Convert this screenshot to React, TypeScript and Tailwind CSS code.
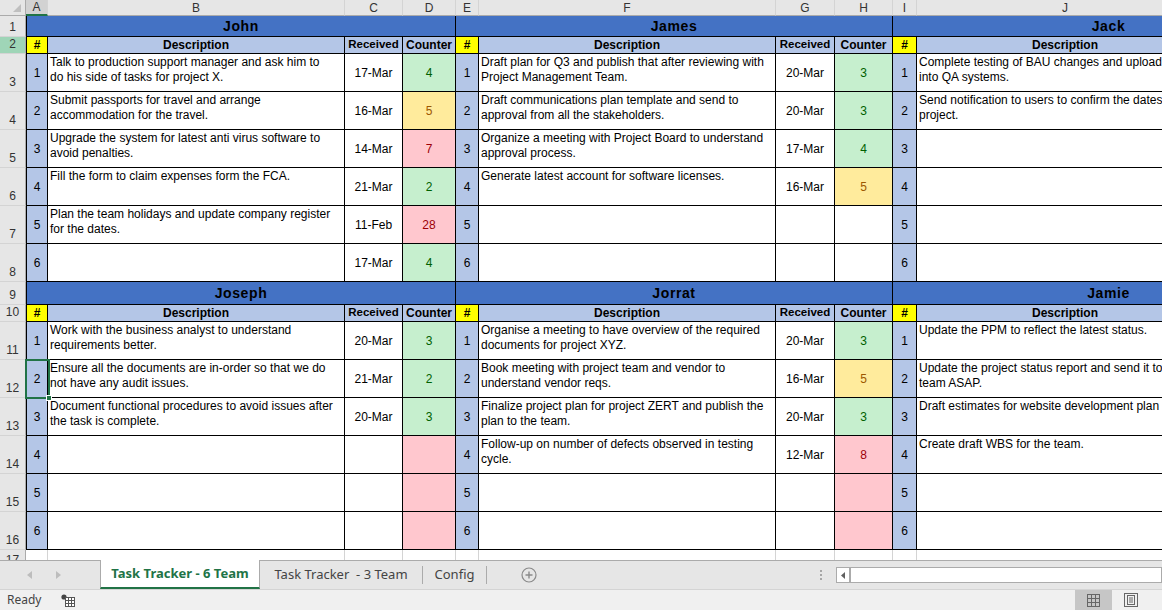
import React from "react";

type Tone = "g" | "y" | "r" | "";

interface Task {
  lines: string[];
  recv: string;
  tone: Tone;
  count: string;
}

interface Block {
  name: string;
  tasks: Task[];
}

const FONT = "font-['Liberation_Sans',Arial,sans-serif]";
const UI = "font-['Noto_Sans','Liberation_Sans',sans-serif]";

const t = (lines: string[], recv = "", tone: Tone = "", count = ""): Task => ({
  lines,
  recv,
  tone,
  count,
});

const topBlocks: Block[] = [
  {
    name: "John",
    tasks: [
      t(["Talk to production support manager and ask him to", "do his side of tasks for project X."], "17-Mar", "g", "4"),
      t(["Submit passports for travel and arrange", "accommodation for the travel."], "16-Mar", "y", "5"),
      t(["Upgrade the system for latest anti virus software to", "avoid penalties."], "14-Mar", "r", "7"),
      t(["Fill the form to claim expenses form the FCA."], "21-Mar", "g", "2"),
      t(["Plan the team holidays and update company register", "for the dates."], "11-Feb", "r", "28"),
      t([], "17-Mar", "g", "4"),
    ],
  },
  {
    name: "James",
    tasks: [
      t(["Draft plan for Q3 and publish that after reviewing with", "Project Management Team."], "20-Mar", "g", "3"),
      t(["Draft communications plan template and send to", "approval from all the stakeholders."], "20-Mar", "g", "3"),
      t(["Organize a meeting with Project Board to understand", "approval process."], "17-Mar", "g", "4"),
      t(["Generate latest account for software licenses."], "16-Mar", "y", "5"),
      t([]),
      t([]),
    ],
  },
  {
    name: "Jack",
    tasks: [
      t(["Complete testing of BAU changes and upload", "into QA systems."], "18-Mar", "g", "3"),
      t(["Send notification to users to confirm the dates for the", "project."], "19-Mar", "g", "2"),
      t([]),
      t([]),
      t([]),
      t([]),
    ],
  },
];

const bottomBlocks: Block[] = [
  {
    name: "Joseph",
    tasks: [
      t(["Work with the business analyst to understand", "requirements better."], "20-Mar", "g", "3"),
      t(["Ensure all the documents are in-order so that we do", "not have any audit issues."], "21-Mar", "g", "2"),
      t(["Document functional procedures to avoid issues after", "the task is complete."], "20-Mar", "g", "3"),
      t([], "", "r"),
      t([], "", "r"),
      t([], "", "r"),
    ],
  },
  {
    name: "Jorrat",
    tasks: [
      t(["Organise a meeting to have overview of the required", "documents for project XYZ."], "20-Mar", "g", "3"),
      t(["Book meeting with project team and vendor to", "understand vendor reqs."], "16-Mar", "y", "5"),
      t(["Finalize project plan for project ZERT and publish the", "plan to the team."], "20-Mar", "g", "3"),
      t(["Follow-up on number of defects observed in testing", "cycle."], "12-Mar", "r", "8"),
      t([], "", "r"),
      t([], "", "r"),
    ],
  },
  {
    name: "Jamie",
    tasks: [
      t(["Update the PPM to reflect the latest status."], "20-Mar", "g", "3"),
      t(["Update the project status report and send it to the", "team ASAP."], "19-Mar", "g", "2"),
      t(["Draft estimates for website development plan"], "18-Mar", "g", "3"),
      t(["Create draft WBS for the team."], "17-Mar", "g", "4"),
      t([]),
      t([]),
    ],
  },
];

const toneClass: Record<Tone, string> = {
  g: "bg-[#c6efce] text-[#006100]",
  y: "bg-[#ffeb9c] text-[#9c5700]",
  r: "bg-[#ffc7ce] text-[#9c0006]",
  "": "bg-white",
};

const letters = ["A", "B", "C", "D", "E", "F", "G", "H", "I", "J", "K", "L"];

function RowHead({ n, on }: { n: number; on?: boolean }) {
  return (
    <div
      className={`flex items-end justify-center pb-[2px] border-r border-b border-r-[#ababab] border-b-[#d4d4d4] text-[12px] leading-[14px] text-[#333] ${
        on ? "bg-[#9fd5b7]" : "bg-[#e6e6e6]"
      }`}
    >
      {n}
    </div>
  );
}

function NameCells({ blocks }: { blocks: Block[] }) {
  return (
    <>
      {blocks.map((b, i) => (
        <div
          key={b.name}
          className={`col-span-4 flex items-center justify-center bg-[#4472c4] border-r border-b border-black text-[14px] font-bold tracking-[0.6px] text-black ${
            i === 0 ? "border-l" : ""
          }`}
        >
          {b.name}
        </div>
      ))}
    </>
  );
}

function HeadCells({ blocks }: { blocks: Block[] }) {
  const cell = "flex items-center justify-center border-r border-b border-black font-bold text-black";
  return (
    <>
      {blocks.map((b, i) => (
        <React.Fragment key={b.name}>
          <div className={`${cell} bg-[#ffff00] text-[12px] ${i === 0 ? "border-l" : ""}`}>#</div>
          <div className={`${cell} bg-[#b4c6e7] text-[12px]`}>Description</div>
          <div className={`${cell} bg-[#b4c6e7] text-[11.5px]`}>Received</div>
          <div className={`${cell} bg-[#b4c6e7] text-[12px]`}>Counter</div>
        </React.Fragment>
      ))}
    </>
  );
}

function TaskCells({ blocks, idx, active }: { blocks: Block[]; idx: number; active?: boolean }) {
  const edge = "border-r border-b border-black text-[12px]";
  return (
    <>
      {blocks.map((b, i) => {
        const task = b.tasks[idx];
        return (
          <React.Fragment key={b.name}>
            <div
              className={`relative flex items-center justify-center bg-[#b4c6e7] ${edge} ${i === 0 ? "border-l" : ""}`}
            >
              {idx + 1}
              {active && i === 0 && (
                <div className="absolute -left-[2px] -top-[1px] w-[25px] h-[40px] border-2 border-[#217346] z-10">
                  <div className="absolute -right-[4px] -bottom-[4px] w-[6px] h-[6px] bg-[#217346] border border-white" />
                </div>
              )}
            </div>
            <div className={`overflow-hidden bg-white pl-[2px] pt-[1px] leading-[15px] ${edge}`}>
              {task.lines.map((l) => (
                <div key={l} className="whitespace-nowrap">
                  {l}
                </div>
              ))}
            </div>
            <div className={`flex items-center justify-center bg-white ${edge}`}>{task.recv}</div>
            <div className={`flex items-center justify-center ${toneClass[task.tone]} ${edge}`}>{task.count}</div>
          </React.Fragment>
        );
      })}
    </>
  );
}

function Sheet() {
  return (
    <div className="grid w-max grid-cols-[26px_22px_297px_58px_53px_23px_297px_59px_58px_24px_297px_58px_53px] grid-rows-[16px_21px_17px_repeat(6,38px)_23px_17px_repeat(6,38px)_20px]">
      {/* column letters */}
      <div className="flex items-end justify-end pr-[4px] pb-[3px] bg-[#e6e6e6] border-r border-b border-[#ababab]">
        <svg width="8" height="8" viewBox="0 0 8 8">
          <polygon points="8,0 8,8 0,8" fill="#bfbfbf" />
        </svg>
      </div>
      {letters.map((l) => (
        <div
          key={l}
          className={`flex items-center justify-center border-r border-r-[#d4d4d4] text-[12px] text-[#333] ${
            l === "A" ? "bg-[#d2d2d2] border-b-2 border-b-[#217346]" : "bg-[#e6e6e6] border-b border-b-[#ababab]"
          }`}
        >
          {l}
        </div>
      ))}

      {/* top section */}
      <RowHead n={1} />
      <NameCells blocks={topBlocks} />
      <RowHead n={2} on />
      <HeadCells blocks={topBlocks} />
      {[0, 1, 2, 3, 4, 5].map((i) => (
        <React.Fragment key={`t${i}`}>
          <RowHead n={i + 3} />
          <TaskCells blocks={topBlocks} idx={i} />
        </React.Fragment>
      ))}

      {/* bottom section */}
      <RowHead n={9} />
      <NameCells blocks={bottomBlocks} />
      <RowHead n={10} />
      <HeadCells blocks={bottomBlocks} />
      {[0, 1, 2, 3, 4, 5].map((i) => (
        <React.Fragment key={`b${i}`}>
          <RowHead n={i + 11} />
          <TaskCells blocks={bottomBlocks} idx={i} active={i === 1} />
        </React.Fragment>
      ))}

      {/* row 17, cut off by the tab bar */}
      <RowHead n={17} />
      {letters.map((l) => (
        <div key={`e${l}`} className="bg-white border-r border-[#d4d4d4]" />
      ))}
    </div>
  );
}

function TabBar() {
  return (
    <div className={`flex h-[29px] shrink-0 items-stretch bg-[#e6e6e6] border-t border-[#ababab] text-[13px] ${UI}`}>
      <div className="flex w-[100px] items-center gap-[24px] pl-[27px]">
        <svg width="5" height="8" viewBox="0 0 5 8">
          <polygon points="5,0 5,8 0,4" fill="#bdbdbd" />
        </svg>
        <svg width="5" height="8" viewBox="0 0 5 8">
          <polygon points="0,0 0,8 5,4" fill="#bdbdbd" />
        </svg>
      </div>
      <div className="flex w-[160px] items-center justify-center bg-white border-x border-[#ababab] border-b-2 border-b-[#217346] -mt-[1px] font-bold text-[#217346]">
        Task Tracker - 6 Team
      </div>
      <div className="flex w-[162px] items-center justify-center">
        <span className="whitespace-pre text-[#444]">Task Tracker  - 3 Team</span>
      </div>
      <div className="my-[5px] w-px bg-[#ababab]" />
      <div className="flex w-[63px] items-center justify-center text-[#444]">Config</div>
      <div className="my-[5px] w-px bg-[#ababab]" />
      <div className="flex w-[84px] items-center justify-center">
        <svg width="16" height="16" viewBox="0 0 16 16">
          <circle cx="8" cy="8" r="7" fill="none" stroke="#8a8a8a" strokeWidth="1.2" />
          <path d="M8 4.5v7M4.5 8h7" stroke="#8a8a8a" strokeWidth="1.4" />
        </svg>
      </div>
      <div className="flex w-[265px] items-center justify-end pr-[14px]">
        <div className="flex flex-col gap-[2px]">
          <span className="block h-[2px] w-[2px] bg-[#a6a6a6]" />
          <span className="block h-[2px] w-[2px] bg-[#a6a6a6]" />
          <span className="block h-[2px] w-[2px] bg-[#a6a6a6]" />
        </div>
      </div>
      <div className="my-[6px] flex flex-1 border border-[#ababab] bg-white">
        <div className="flex w-[14px] items-center justify-center border-r-2 border-[#ababab]">
          <svg width="4" height="7" viewBox="0 0 4 7">
            <polygon points="4,0 4,7 0,3.5" fill="#606060" />
          </svg>
        </div>
      </div>
    </div>
  );
}

function StatusBar() {
  return (
    <div className={`flex h-[21px] shrink-0 items-stretch bg-[#f0f0f0] border-t border-[#d4d4d4] text-[12px] text-[#444] ${UI}`}>
      <span className="ml-[7px] flex items-center">Ready</span>
      <div className="ml-[20px] flex items-center">
        <svg width="14" height="13" viewBox="0 0 14 13">
          <circle cx="3" cy="3" r="2.6" fill="#444" />
          <rect x="4.5" y="3.5" width="9" height="9" fill="#fff" stroke="#555" />
          <path d="M4.5 6.5h9M4.5 9.5h9M7.5 3.5v9M10.5 3.5v9" stroke="#555" strokeWidth="1" />
        </svg>
      </div>
      <div className="ml-auto flex w-[87px] items-stretch">
        <div className="flex w-[37px] items-center justify-center bg-[#c6c6c6]">
          <svg width="13" height="13" viewBox="0 0 13 13">
            <rect x="0.5" y="0.5" width="12" height="12" fill="none" stroke="#666" />
            <path d="M4.5 0.5v12M8.5 0.5v12M0.5 4.5h12M0.5 8.5h12" stroke="#666" />
          </svg>
        </div>
        <div className="ml-[12px] flex items-center">
          <svg width="14" height="14" viewBox="0 0 14 14">
            <rect x="0.5" y="0.5" width="13" height="13" fill="none" stroke="#666" />
            <rect x="3.5" y="2.5" width="7" height="9" fill="none" stroke="#666" />
            <path d="M5 5h4M5 7h4M5 9h4" stroke="#666" />
          </svg>
        </div>
      </div>
    </div>
  );
}

export default function App() {
  return (
    <div className={`flex h-[610px] w-[1162px] flex-col overflow-hidden bg-white text-black ${FONT}`}>
      <div className="h-[560px] shrink-0 overflow-hidden">
        <Sheet />
      </div>
      <TabBar />
      <StatusBar />
    </div>
  );
}
